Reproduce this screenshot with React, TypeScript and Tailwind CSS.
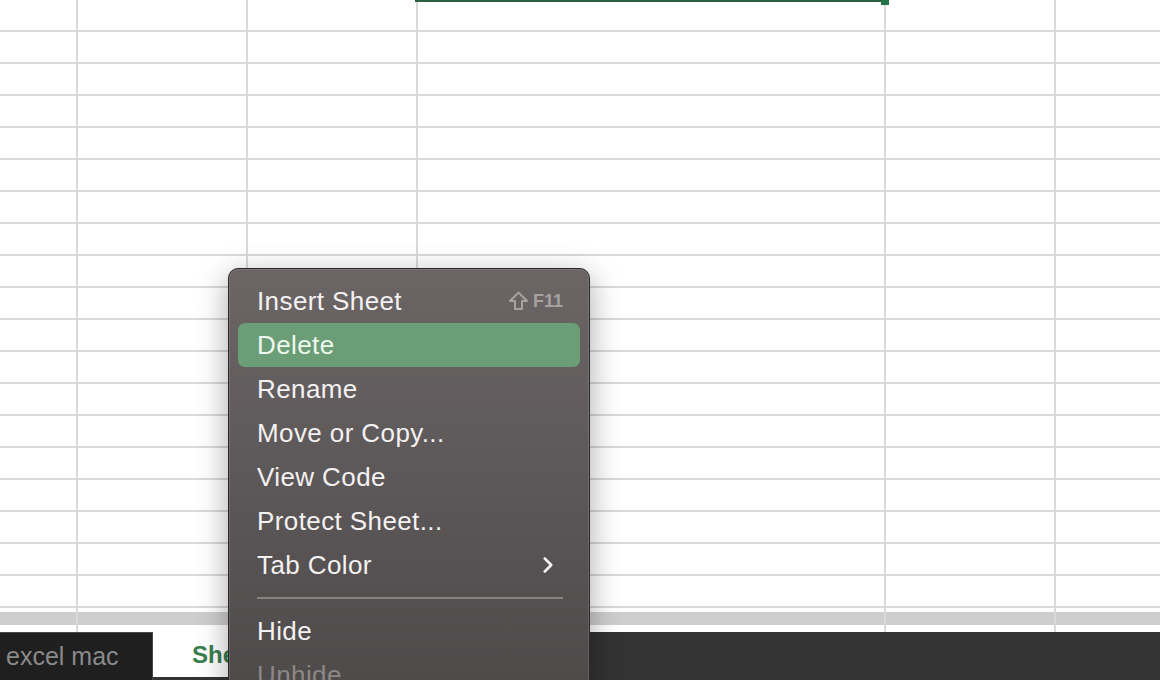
import { ChevronRight } from 'lucide-react'

const cols = [78, 170, 170, 468, 170, 0]
const rowCount = 19

function GridRow() {
  return (
    <div className="flex h-[32px] shrink-0">
      {cols.map((w, i) => (
        <div
          key={i}
          className={`h-full border-b-2 border-[#d9d9d9] ${i < cols.length - 1 ? 'border-r-2' : 'flex-1'}`}
          style={w ? { width: w } : undefined}
        />
      ))}
    </div>
  )
}

function ShiftIcon() {
  return (
    <svg width="21" height="20" viewBox="0 0 21 20" fill="none" className="mr-[4px]">
      <path
        d="M10.5 1.5 L19 10 H14 V18 H7 V10 H2 Z"
        stroke="#a7a1a1"
        strokeWidth="2"
        strokeLinejoin="round"
      />
    </svg>
  )
}

type Item = { label: string; shortcut?: boolean; submenu?: boolean; active?: boolean; disabled?: boolean }

const topItems: Item[] = [
  { label: 'Insert Sheet', shortcut: true },
  { label: 'Delete', active: true },
  { label: 'Rename' },
  { label: 'Move or Copy...' },
  { label: 'View Code' },
  { label: 'Protect Sheet...' },
  { label: 'Tab Color', submenu: true },
]

const bottomItems: Item[] = [{ label: 'Hide' }, { label: 'Unhide', disabled: true }]

function MenuItem({ item }: { item: Item }) {
  return (
    <div
      className={`flex h-[44px] items-center justify-between rounded-[7px] pl-[19px] pr-[17px] ${
        item.active ? 'bg-[#6b9e77] text-[#eef8ee]' : item.disabled ? 'text-[#8d8787]' : 'text-[#f3f1f1]'
      }`}
    >
      <span>{item.label}</span>
      {item.shortcut && (
        <span className="flex items-center text-[18px] font-semibold tracking-normal text-[#a7a1a1]">
          <ShiftIcon />
          F11
        </span>
      )}
      {item.submenu && <ChevronRight size={26} strokeWidth={2.4} className="mr-[2px] text-[#f3f1f1]" />}
    </div>
  )
}

export default function App() {
  return (
    <div className="relative flex h-[680px] w-[1160px] flex-col overflow-hidden bg-white font-['Liberation_Sans',Arial,sans-serif]">
      <div className="flex flex-col">
        {Array.from({ length: rowCount }).map((_, i) => (
          <GridRow key={i} />
        ))}
      </div>

      {/* horizontal scrollbar strip */}
      <div className="flex h-[24px] shrink-0 bg-[linear-gradient(to_bottom,white_4px,#cecece_4px,#cecece_17px,white_17px)]">
        {cols.map((w, i) => (
          <div
            key={i}
            className={`h-full border-[#d9d9d9] ${i < cols.length - 1 ? 'border-r-2' : 'flex-1'}`}
            style={w ? { width: w } : undefined}
          />
        ))}
      </div>

      {/* sheet tabs */}
      <div className="flex h-[48px] shrink-0 bg-[#333333]">
        <div className="flex w-[153px] items-center border-t border-r border-[#474747] bg-[#1f1f1f] pl-[6px] text-[25px] text-[#8a8a8a]">
          excel mac
        </div>
        <div className="mb-[3px] flex w-[180px] items-center bg-white pl-[39px] text-[24px] font-bold text-[#3a7d4f]">
          Sheet1
        </div>
      </div>

      {/* selected cell edge above the viewport */}
      <div className="absolute left-[415px] top-0 h-[2px] w-[468px] bg-[#2b5f3d]" />
      <div className="absolute left-[881px] top-0 h-[5px] w-[8px] bg-[#217346]" />

      {/* context menu */}
      <div className="absolute left-[228px] top-[268px] h-[440px] w-[362px] rounded-[10px] border border-[#2a2727] bg-[linear-gradient(to_bottom,#6b6566,#4d4949)] px-[9px] pt-[10px] text-[26px] leading-none tracking-[0.4px] shadow-[0_8px_30px_rgba(0,0,0,0.35),inset_0_0_0_1px_rgba(255,255,255,0.12)]">
        {topItems.map(item => (
          <MenuItem key={item.label} item={item} />
        ))}
        <div className="flex h-[22px] items-center pl-[19px] pr-[17px]">
          <div className="h-[2px] w-full bg-[#888282]" />
        </div>
        {bottomItems.map(item => (
          <MenuItem key={item.label} item={item} />
        ))}
      </div>
    </div>
  )
}
